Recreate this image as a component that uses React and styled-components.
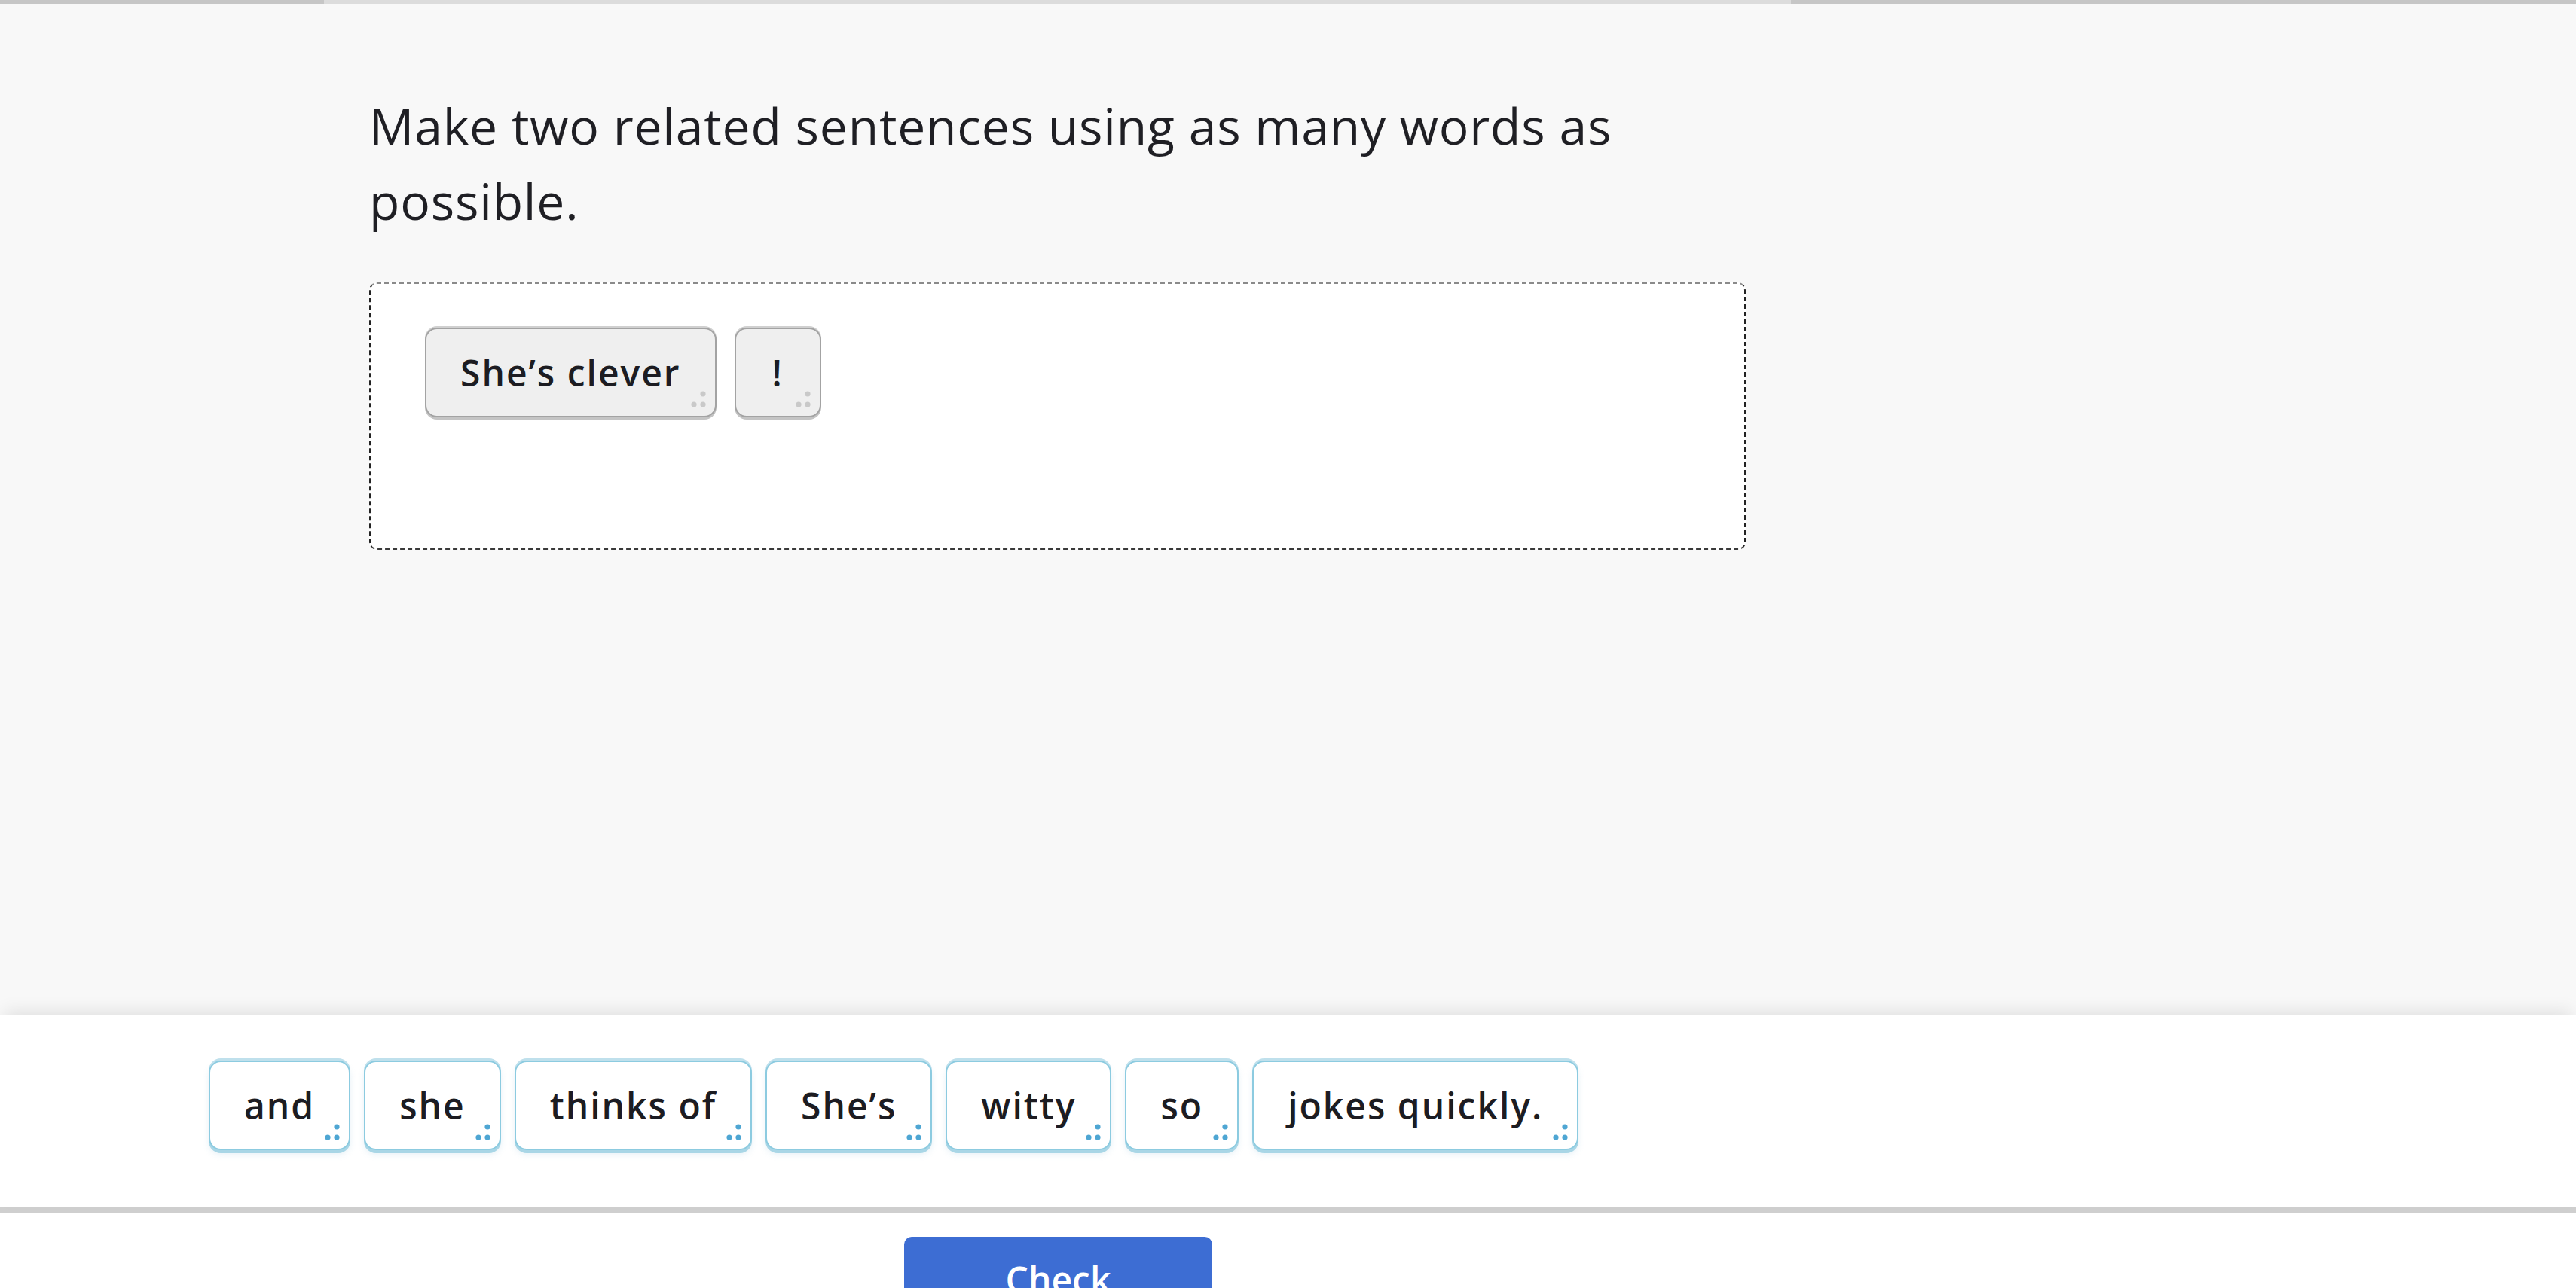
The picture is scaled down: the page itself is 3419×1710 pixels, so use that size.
import React from 'react';
import styled, { createGlobalStyle } from 'styled-components';

const GlobalStyle = createGlobalStyle`
  html, body {
    margin: 0;
    padding: 0;
    overflow: hidden;
    background: #ffffff;
    font-family: "Open Sans", "Noto Sans", Arial, sans-serif;
  }
`;

const Page = styled.div`
  display: flex;
  flex-direction: column;
  min-height: 100vh;
`;

const TopRule = styled.div`
  display: grid;
  grid-template-columns: 430px 1947px 1fr;
  height: 5px;
`;

const RuleSegment = styled.div`
  background: ${(p) => (p.$light ? '#dcdcdc' : '#c6c6c6')};
`;

const Stage = styled.main`
  height: 1342px;
  background: #f8f8f8;
  padding-left: 430px;
  box-sizing: border-box;
`;

const Column = styled.div`
  width: 1947px;
  padding: 0 60px;
  box-sizing: border-box;
`;

const Prompt = styled.h1`
  margin: 0;
  padding-top: 111px;
  font-size: 66px;
  line-height: 100px;
  letter-spacing: 0.8px;
  font-weight: 400;
  color: #1f1f24;
  max-width: 1760px;
`;

const DropZone = styled.div`
  margin-top: 59px;
  height: 355px;
  box-sizing: border-box;
  background: #ffffff;
  border: 2px dashed #222222;
  border-top-color: #8a8a8a;
  border-bottom-color: #3a3a3a;
  border-radius: 10px;
  padding: 58px 72px;
  display: flex;
  align-items: flex-start;
  gap: 24px;
`;

const Chip = styled.div`
  position: relative;
  height: 119px;
  min-width: 115px;
  box-sizing: border-box;
  padding: 0 45px;
  display: flex;
  align-items: center;
  justify-content: center;
  border-radius: 16px;
  font-size: 48px;
  font-weight: 600;
  letter-spacing: 2px;
  color: #1c1c22;
  white-space: nowrap;
  background: ${(p) => (p.$placed ? '#efefef' : '#ffffff')};
  border: 2px solid ${(p) => (p.$placed ? '#a3a3a3' : '#8ccbe0')};
  box-shadow: ${(p) =>
    p.$placed
      ? '0 3px 0 #c4c4c4, 0 -2px 0 #d0d0d0'
      : '0 4px 0 #a9d6e6, 0 -3px 0 #bfe0ec, 0 6px 8px rgba(120, 180, 210, 0.18)'};
`;

const Grip = styled.svg`
  position: absolute;
  right: 8px;
  bottom: 9px;
  width: 26px;
  height: 26px;
`;

const Bank = styled.section`
  position: relative;
  z-index: 1;
  height: 256px;
  box-sizing: border-box;
  background: #ffffff;
  padding: 61px 0 0 277px;
  display: flex;
  align-items: flex-start;
  gap: 18px;
  box-shadow: 0 -10px 22px -6px rgba(0, 0, 0, 0.1);
`;

const Divider = styled.div`
  height: 7px;
  background: #cfcfcf;
`;

const Footer = styled.footer`
  margin-left: 430px;
  width: 1947px;
  display: flex;
  justify-content: center;
  padding-top: 32px;
`;

const CheckButton = styled.button`
  width: 409px;
  height: 140px;
  border: none;
  border-radius: 10px;
  background: #3d6dd3;
  color: #ffffff;
  font-family: inherit;
  font-size: 48px;
  font-weight: 600;
  padding-bottom: 28px;
  margin-left: 2px;
`;

const Dots = ({ color }) => (
  <Grip viewBox="0 0 26 26">
    <circle cx="18" cy="6" r="3.6" fill={color} />
    <circle cx="6" cy="20" r="3.6" fill={color} />
    <circle cx="18" cy="20" r="3.6" fill={color} />
  </Grip>
);

const placed = ['She’s clever', '!'];
const words = ['and', 'she', 'thinks of', 'She’s', 'witty', 'so', 'jokes quickly.'];

export default function App() {
  return (
    <Page>
      <GlobalStyle />
      <TopRule>
        <RuleSegment />
        <RuleSegment $light />
        <RuleSegment />
      </TopRule>
      <Stage>
        <Column>
          <Prompt>Make two related sentences using as many words as possible.</Prompt>
          <DropZone>
            {placed.map((w) => (
              <Chip key={w} $placed>
                {w}
                <Dots color="#c9c9c9" />
              </Chip>
            ))}
          </DropZone>
        </Column>
      </Stage>
      <Bank>
        {words.map((w) => (
          <Chip key={w}>
            {w}
            <Dots color="#4ea6d3" />
          </Chip>
        ))}
      </Bank>
      <Divider />
      <Footer>
        <CheckButton>Check</CheckButton>
      </Footer>
    </Page>
  );
}
